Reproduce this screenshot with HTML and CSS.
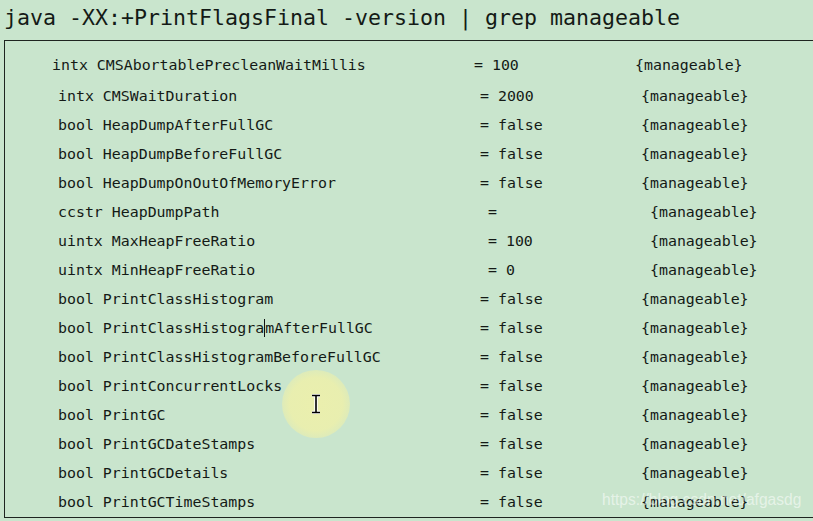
FILE: index.html
```html
<!DOCTYPE html>
<html>
<head>
<meta charset="utf-8">
<link rel="stylesheet" href="styles.css">
</head>
<body>
<div class="page">
  <div class="cmd">java -XX:+PrintFlagsFinal -version | grep manageable</div>
  <div class="box">
    <div class="row r-a"><span class="name">intx CMSAbortablePrecleanWaitMillis</span><span class="val">= 100</span><span class="tag">{manageable}</span></div>
    <div class="row r-b"><span class="name">intx CMSWaitDuration</span><span class="val">= 2000</span><span class="tag">{manageable}</span></div>
    <div class="row r-b"><span class="name">bool HeapDumpAfterFullGC</span><span class="val">= false</span><span class="tag">{manageable}</span></div>
    <div class="row r-b"><span class="name">bool HeapDumpBeforeFullGC</span><span class="val">= false</span><span class="tag">{manageable}</span></div>
    <div class="row r-b"><span class="name">bool HeapDumpOnOutOfMemoryError</span><span class="val">= false</span><span class="tag">{manageable}</span></div>
    <div class="row r-c"><span class="name">ccstr HeapDumpPath</span><span class="val">=</span><span class="tag">{manageable}</span></div>
    <div class="row r-c"><span class="name">uintx MaxHeapFreeRatio</span><span class="val">= 100</span><span class="tag">{manageable}</span></div>
    <div class="row r-c"><span class="name">uintx MinHeapFreeRatio</span><span class="val">= 0</span><span class="tag">{manageable}</span></div>
    <div class="row r-b"><span class="name">bool PrintClassHistogram</span><span class="val">= false</span><span class="tag">{manageable}</span></div>
    <div class="row r-b"><span class="name">bool PrintClassHistogra<span class="caret"></span>mAfterFullGC</span><span class="val">= false</span><span class="tag">{manageable}</span></div>
    <div class="row r-b"><span class="name">bool PrintClassHistogramBeforeFullGC</span><span class="val">= false</span><span class="tag">{manageable}</span></div>
    <div class="row r-b"><span class="name">bool PrintConcurrentLocks</span><span class="val">= false</span><span class="tag">{manageable}</span></div>
    <div class="row r-b"><span class="name">bool PrintGC</span><span class="val">= false</span><span class="tag">{manageable}</span></div>
    <div class="row r-b"><span class="name">bool PrintGCDateStamps</span><span class="val">= false</span><span class="tag">{manageable}</span></div>
    <div class="row r-b"><span class="name">bool PrintGCDetails</span><span class="val">= false</span><span class="tag">{manageable}</span></div>
    <div class="row r-b"><span class="name">bool PrintGCTimeStamps</span><span class="val">= false</span><span class="tag">{manageable}</span></div>
    <div class="watermark">https://blog.csdn.net/afgasdg</div>
  </div>
  <div class="pointer">
    <svg width="10" height="20" viewBox="0 0 10 20"><path d="M1 1.5h8M5 1.5v17M1 18.5h8" stroke="#fff" stroke-width="3.5" fill="none"/><path d="M1 1.5h8M5 1.5v17M1 18.5h8" stroke="#000" stroke-width="1.6" fill="none"/></svg>
  </div>
</div>
</body>
</html>
```

FILE: styles.css
```css
html, body {
  margin: 0;
  padding: 0;
  background: #c9e5cd;
}
.page {
  position: relative;
  width: 813px;
  height: 521px;
  overflow: hidden;
  background: #c9e5cd;
  color: #141a16;
}
.cmd {
  font-family: "DejaVu Sans Mono", "Liberation Mono", monospace;
  font-size: 21.6px;
  line-height: 26px;
  padding: 5px 0 0 4px;
  height: 35px;
}
.box {
  position: relative;
  margin-left: 4px;
  width: 830px;
  height: 478px;
  border: 1px solid #1f2420;
  box-sizing: border-box;
  padding-top: 13px;
  font-family: "DejaVu Sans Mono", "Liberation Mono", monospace;
  font-size: 14.9px;
}
.row {
  display: flex;
  height: 29px;
  line-height: 22px;
  white-space: pre;
}
.row.r-a { height: 31px; }
.name { flex: none; }
.val, .tag { flex: none; }
.r-a .name { margin-left: 47px; width: 422px; }
.r-a .val { width: 161px; }
.r-b .name { margin-left: 53px; width: 422px; }
.r-b .val { width: 161px; }
.r-c .name { margin-left: 53px; width: 430px; }
.r-c .val { width: 162px; }
.caret {
  display: inline-block;
  width: 1px;
  height: 18px;
  background: #111;
  vertical-align: -4px;
}
.watermark {
  position: absolute;
  left: 597px;
  top: 450px;
  font-family: "Liberation Sans", Arial, sans-serif;
  font-size: 15.6px;
  color: rgba(255,255,255,0.55);
  white-space: nowrap;
}
.pointer {
  position: absolute;
  left: 282px;
  top: 370px;
  width: 68px;
  height: 68px;
  border-radius: 50%;
  background: radial-gradient(circle, rgba(238,240,170,0.9) 0%, rgba(238,240,170,0.85) 55%, rgba(238,240,170,0) 100%);
  display: flex;
  align-items: center;
  justify-content: center;
}
```
